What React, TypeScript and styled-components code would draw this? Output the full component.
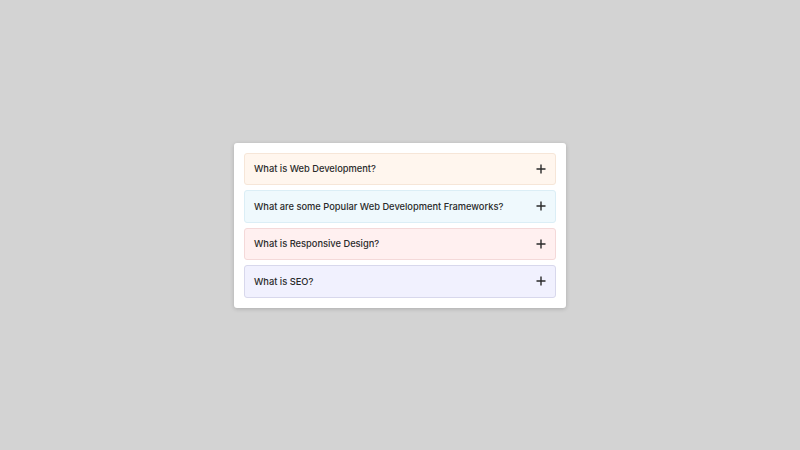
import React from "react";
import styled, { createGlobalStyle } from "styled-components";

const GlobalStyle = createGlobalStyle`
  html, body {
    margin: 0;
    padding: 0;
    height: 100%;
    background: #d3d3d3;
  }
  #root {
    height: 100%;
  }
`;

const Page = styled.div`
  display: flex;
  align-items: center;
  justify-content: center;
  width: 800px;
  height: 450px;
  font-family: Inter, "Open Sans", sans-serif;
`;

const Card = styled.div`
  width: 312px;
  padding: 10px;
  background: #ffffff;
  border-radius: 3px;
  box-shadow: 0 1px 4px rgba(0, 0, 0, 0.18);
  display: flex;
  flex-direction: column;
  gap: 5px;
`;

const Item = styled.div<{ $bg: string; $border: string }>`
  display: flex;
  align-items: center;
  justify-content: space-between;
  height: 30.5px;
  padding: 0 9px 0 9px;
  background: ${(p) => p.$bg};
  border: 1px solid ${(p) => p.$border};
  border-radius: 3px;
  cursor: pointer;
`;

const Question = styled.span`
  font-size: 9.3px;
  font-weight: 500;
  color: #2a2a2a;
`;

const Plus = styled.svg`
  width: 10px;
  height: 10px;
  flex-shrink: 0;
`;

const items = [
  { q: "What is Web Development?", bg: "#fff6ee", border: "#f6e6d8" },
  { q: "What are some Popular Web Development Frameworks?", bg: "#eff9fd", border: "#dbeef6" },
  { q: "What is Responsive Design?", bg: "#fff0f0", border: "#f4d9d9" },
  { q: "What is SEO?", bg: "#f1f1fe", border: "#d8d8ec" },
];

export default function App() {
  return (
    <>
      <GlobalStyle />
      <Page>
        <Card>
          {items.map((it) => (
            <Item key={it.q} $bg={it.bg} $border={it.border}>
              <Question>{it.q}</Question>
              <Plus viewBox="0 0 10 10">
                <path d="M5 0.5v9M0.5 5h9" stroke="#2a2a2a" strokeWidth="1.4" />
              </Plus>
            </Item>
          ))}
        </Card>
      </Page>
    </>
  );
}
